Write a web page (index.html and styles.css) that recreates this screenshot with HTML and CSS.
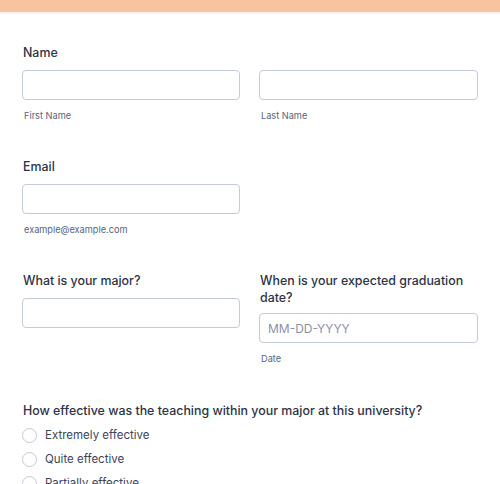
FILE: index.html
```html
<!DOCTYPE html>
<html lang="en">

<head>
  <meta charset="utf-8">
  <title>Student Survey</title>
  <link rel="stylesheet" href="styles.css">
</head>

<body>

  <div class="topbar"></div>

  <form class="survey">

    <div class="field">
      <label class="label">Name</label>
      <div class="cols">
        <div class="col">
          <input class="input" type="text">
          <span class="sub">First Name</span>
        </div>
        <div class="col">
          <input class="input" type="text">
          <span class="sub">Last Name</span>
        </div>
      </div>
    </div>

    <div class="field">
      <label class="label">Email</label>
      <div class="cols">
        <div class="col">
          <input class="input" type="email">
          <span class="sub">example@example.com</span>
        </div>
      </div>
    </div>

    <div class="cols row">
      <div class="col">
        <label class="label">What is your major?</label>
        <input class="input" type="text">
      </div>
      <div class="col">
        <label class="label">When is your expected graduation date?</label>
        <input class="input date" type="text" placeholder="MM-DD-YYYY">
        <span class="sub">Date</span>
      </div>
    </div>

    <div class="field question">
      <label class="label">How effective was the teaching within your major at this university?</label>
      <ul class="options">
        <li><span class="radio"></span>Extremely effective</li>
        <li><span class="radio"></span>Quite effective</li>
        <li><span class="radio"></span>Partially effective</li>
      </ul>
    </div>

  </form>

</body>

</html>
```

FILE: styles.css
```css
* {
  box-sizing: border-box;
}

body {
  margin: 0;
  font-family: Inter, "Noto Sans", sans-serif;
  color: #2c3345;
  background-color: #fff;
  overflow: hidden;
}

.topbar {
  block-size: 12px;
  background-color: #f8c49f;
  box-shadow: 0 2px 0 #f3f3f6;
}

.survey {
  display: flex;
  flex-flow: column;
  gap: 35px;
  padding: 32px 22px 0;
}

.field {
  display: flex;
  flex-flow: column;
}

.label {
  display: block;
  font-size: 12.4px;
  font-weight: 500;
  line-height: 17px;
  margin-block-end: 9px;
  padding-inline-start: 1px;
}

.cols {
  display: grid;
  grid-template-columns: 218px 219px;
  column-gap: 19px;
}

.row .col:last-child .label {
  margin-block-end: 7px;
}

.col {
  display: flex;
  flex-flow: column;
}

.input {
  block-size: 30px;
  inline-size: 100%;
  border: 1px solid #c3cad8;
  border-radius: 4px;
  padding: 0 8px;
  font: inherit;
  font-size: 12px;
  color: #2c3345;
  background-color: #fff;
}

.input::placeholder {
  color: #8d8fa8;
}

.sub {
  margin-block-start: 9px;
  padding-inline-start: 2px;
  font-size: 9.2px;
  line-height: 14px;
  color: #57647e;
}

.question {
  margin-block-start: 1px;
}

.question .label {
  margin-block-end: 4px;
}

.options {
  list-style-type: '';
  margin: 0;
  padding: 0;

  li {
    display: flex;
    align-items: center;
    gap: 8px;
    block-size: 24px;
    font-size: 11.5px;
    color: #3e4456;
  }
}

.radio {
  inline-size: 15px;
  block-size: 15px;
  border: 1px solid #c3cad8;
  border-radius: 50%;
  background-color: #fff;
}
```
